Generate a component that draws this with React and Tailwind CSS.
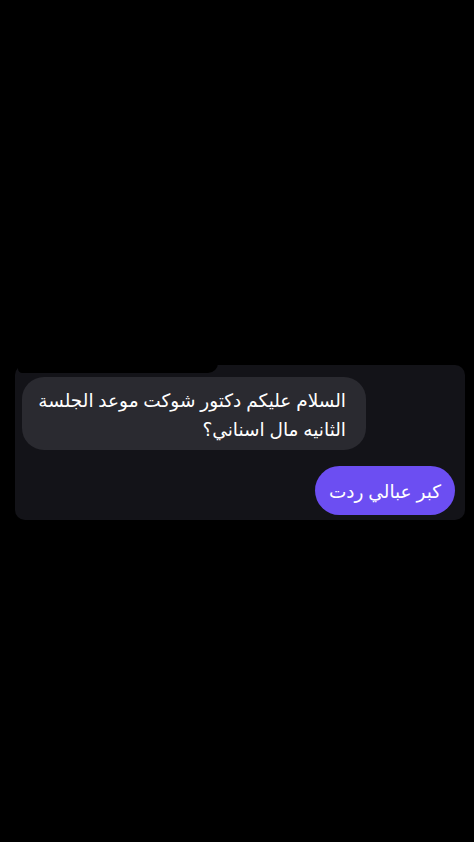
export default function App() {
  return (
    <div
      className="min-h-[842px] w-full bg-black flex flex-col pt-[365px] pl-[15px] pr-[9px]"
      style={{ fontFamily: '"Noto Sans", "DejaVu Sans", sans-serif' }}
      dir="rtl"
    >
      <div className="relative bg-[#131318] rounded-[10px] pt-[12px] pb-[5px] pr-[10px] pl-[7px] flex flex-col gap-[16px]">
        {/* black notch overlapping the panel top */}
        <div className="absolute left-[3px] top-[-2px] w-[200px] h-[10px] bg-black rounded-br-[14px] rounded-bl-[6px]" />
        <div className="self-end bg-[#2a2a30] text-white rounded-[22px] pl-[10px] pr-[20px] pt-[8px] pb-[7px] w-[344px] text-[18.5px] leading-[29px] whitespace-nowrap">
          السلام عليكم دكتور شوكت موعد الجلسة
          <br />
          الثانيه مال اسناني؟
        </div>
        <div className="self-start bg-[#6c4ef2] text-white rounded-full w-[140px] justify-center h-[49px] flex items-center text-[18.5px]">
          كبر عبالي ردت
        </div>
      </div>
    </div>
  );
}
